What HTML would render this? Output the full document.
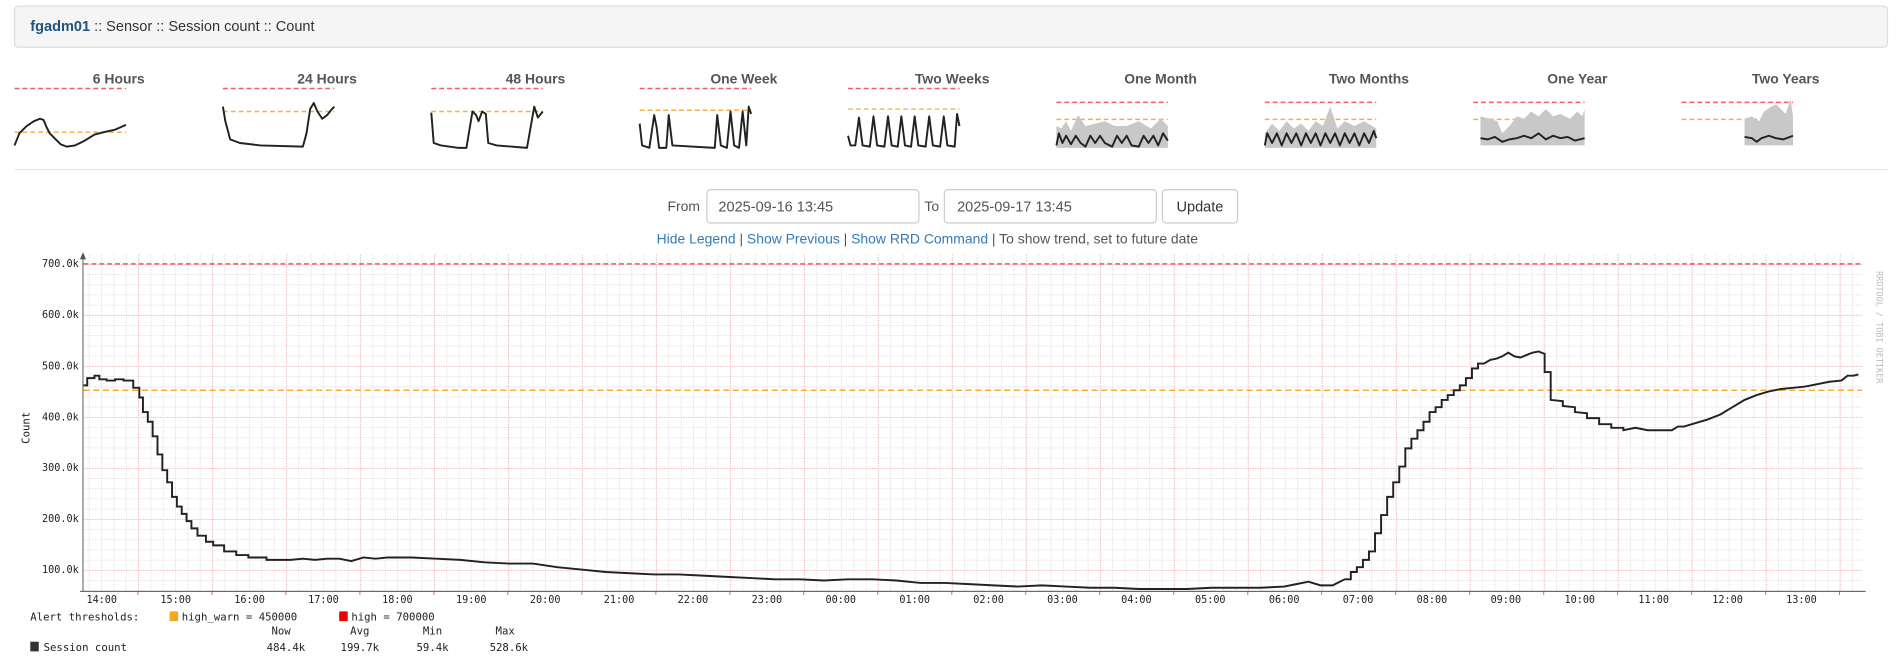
<!DOCTYPE html>
<html><head><meta charset="utf-8"><style>
html,body{margin:0;padding:0;background:#fff;overflow:hidden}
svg{display:block}
.s{font-family:"Liberation Sans",sans-serif}
.m{font-family:"DejaVu Sans Mono","Liberation Mono",monospace}
</style></head><body>
<svg width="1899" height="656" viewBox="0 0 1567.5 541.3" preserveAspectRatio="none" xmlns="http://www.w3.org/2000/svg">
<defs>
<pattern id="vmin" patternUnits="userSpaceOnUse" x="113.9" y="0" width="10.178" height="4"><line x1="0.5" y1="0" x2="0.5" y2="4" stroke="#d8d8d8" stroke-width="0.7" stroke-dasharray="1 1"/></pattern>
<pattern id="vmaj" patternUnits="userSpaceOnUse" x="113.9" y="0" width="61.07" height="4"><line x1="0.5" y1="0" x2="0.5" y2="4" stroke="#f7b5b5" stroke-width="0.8" stroke-dasharray="1 1"/></pattern>
<pattern id="hmin" patternUnits="userSpaceOnUse" x="0" y="217.8" width="4" height="8.416"><line x1="0" y1="0.3" x2="4" y2="0.3" stroke="#d8d8d8" stroke-width="0.7" stroke-dasharray="1 1"/></pattern>
<pattern id="hmaj" patternUnits="userSpaceOnUse" x="0" y="217.8" width="4" height="42.08"><line x1="0" y1="0.3" x2="4" y2="0.3" stroke="#f7b5b5" stroke-width="0.8" stroke-dasharray="1 1"/></pattern>
</defs>
<!-- breadcrumb -->
<rect x="12" y="5" width="1546" height="34" rx="3" fill="#f5f5f5" stroke="#dcdcdc"/>
<text x="25" y="25.5" class="s" font-size="12" fill="#333"><tspan font-weight="bold" fill="#23527c">fgadm01</tspan> :: Sensor :: Session count :: Count</text>
<!-- thumbnails -->
<g class="s" font-size="11.5" font-weight="bold" fill="#555" text-anchor="middle">
<text x="98" y="69">6 Hours</text><text x="270" y="69">24 Hours</text><text x="442" y="69">48 Hours</text><text x="614" y="69">One Week</text><text x="786" y="69">Two Weeks</text><text x="958" y="69">One Month</text><text x="1130" y="69">Two Months</text><text x="1302" y="69">One Year</text><text x="1474" y="69">Two Years</text>
</g>
<g fill="none" stroke-dasharray="4 2.5" stroke-width="1.2">
<path d="M12 73H104M184 73H276M356 73H448M528 73H620M700 73H792M872 84.5H964M1044 84.5H1136M1216 84.5H1308M1388 84.5H1480" stroke="#f0606a"/>
<path d="M12 109H104M184 92H276M356 92H448M528 91H620M700 90H792M872 98.5H964M1044 98.5H1136M1216 98.5H1308M1388 98.5H1480" stroke="#f5b04a"/>
</g>
<g fill="#c8c8c8">
<path d="M872 104L876 106 880 100 884 108 890 95 896 104 904 102 912 100 920 104 930 104 940 100 950 106 958 98 964 104V122H872Z"/>
<path d="M1044 110L1050 102 1056 108 1062 100 1068 106 1074 102 1080 108 1086 100 1092 104 1098 88 1104 106 1110 100 1118 104 1126 100 1136 106V122H1044Z"/>
<path d="M1222 96L1230 98 1236 100 1240 110 1246 104 1252 96 1258 98 1264 92 1270 96 1276 90 1282 96 1288 94 1296 98 1302 92 1306 96 1308 90V120H1222Z"/>
<path d="M1440 98L1446 96 1452 100 1456 92 1462 88 1466 86 1470 90 1474 94 1478 82 1480 96V120H1440Z"/>
</g>
<g fill="none" stroke="#222" stroke-width="1.6" stroke-linejoin="round">
<polyline points="12,120 16,110 22,104 28,100 33,98 36,99 38,104 41,110 45,114 50,119 55,121 62,120 70,116 78,111 86,109 95,107 104,103"/>
<polyline points="184,88 186,100 190,115 198,118 215,120 250,121 253,110 256,90 259,85 262,92 266,98 270,95 274,90 276,88"/>
<polyline points="356,93 358,118 364,120 378,122 385,122 387,110 390,92 393,95 395,100 398,92 401,94 403,118 410,120 435,122 438,105 441,88 444,97 448,92"/>
<polyline points="528,102 530,120 536,122 540,95 542,105 544,122 550,122 552,95 555,120 590,122 592,95 595,120 600,122 603,92 606,120 610,122 613,92 616,120 618,88 620,94"/>
<polyline points="700,112 702,120 706,120 709,97 712,120 718,121 721,96 724,120 730,121 733,96 736,120 741,121 744,96 747,120 752,121 755,96 758,120 764,121 767,96 770,120 776,121 779,96 782,120 788,121 790,94 792,104"/>
<polyline points="872,120 874,110 877,118 880,112 884,119 888,112 892,118 896,121 900,112 904,118 908,112 912,118 918,121 922,112 926,118 930,112 934,120 940,121 944,112 948,118 952,112 956,120 960,110 964,116"/>
<polyline points="1044,120 1046,110 1050,118 1054,110 1058,120 1062,110 1066,118 1070,110 1074,120 1078,110 1082,118 1086,110 1090,120 1094,110 1098,118 1102,110 1106,120 1110,110 1114,118 1118,110 1122,120 1126,110 1130,118 1134,108 1136,114"/>
<polyline points="1222,114 1228,115 1234,113 1240,117 1246,115 1252,114 1258,112 1264,114 1270,110 1276,115 1282,112 1288,114 1294,113 1300,116 1308,114"/>
<polyline points="1440,113 1446,114 1450,117 1454,114 1460,112 1466,114 1472,115 1480,112"/>
</g>
<line x1="12" y1="140" x2="1558" y2="140" stroke="#e5e5e5"/>
<!-- form -->
<g class="s" font-size="11.5">
<text x="551" y="174" fill="#555">From</text>
<rect x="583.5" y="156.5" width="175" height="27.5" rx="3" fill="#fff" stroke="#ccc"/>
<text x="593" y="174.5" fill="#555" font-size="12">2025-09-16 13:45</text>
<text x="763" y="174" fill="#555">To</text>
<rect x="779.5" y="156.5" width="175" height="27.5" rx="3" fill="#fff" stroke="#ccc"/>
<text x="790" y="174.5" fill="#555" font-size="12">2025-09-17 13:45</text>
<rect x="959.5" y="156.5" width="62" height="27.5" rx="3" fill="#fff" stroke="#ccc"/>
<text x="990.5" y="174.5" fill="#333" font-size="12" text-anchor="middle">Update</text>
<text x="542" y="201" font-size="11.5"><tspan fill="#337ab7">Hide Legend</tspan><tspan fill="#555"> | </tspan><tspan fill="#337ab7">Show Previous</tspan><tspan fill="#555"> | </tspan><tspan fill="#337ab7">Show RRD Command</tspan><tspan fill="#555"> | To show trend, set to future date</tspan></text>
</g>
<!-- graph grid -->
<rect x="69" y="210" width="1468" height="278" fill="url(#vmin)"/>
<rect x="69" y="210" width="1468" height="278" fill="url(#hmin)"/>
<rect x="69" y="210" width="1468" height="278" fill="url(#vmaj)"/>
<rect x="69" y="210" width="1468" height="278" fill="url(#hmaj)"/>
<line x1="69" y1="217.8" x2="1537" y2="217.8" stroke="#e8202a" stroke-width="0.9" stroke-dasharray="4 2.5"/>
<line x1="69" y1="322" x2="1537" y2="322" stroke="#f5a010" stroke-width="1.1" stroke-dasharray="5 3"/>
<line x1="68.5" y1="210" x2="68.5" y2="488" stroke="#555" stroke-width="0.8"/>
<path d="M66 214L68.5 208 71 214Z" fill="#555"/>
<line x1="66" y1="488" x2="1540" y2="488" stroke="#555" stroke-width="0.8"/>
<g stroke="#c33" stroke-width="0.6">
<path d="M113.9 488v3M175 488v3M236 488v3M297.1 488v3M358.2 488v3M419.2 488v3M480.3 488v3M541.4 488v3M602.5 488v3M663.5 488v3M724.6 488v3M785.7 488v3M846.7 488v3M907.8 488v3M968.9 488v3M1030 488v3M1091 488v3M1152.1 488v3M1213.2 488v3M1274.3 488v3M1335.3 488v3M1396.4 488v3M1457.5 488v3M1518.5 488v3"/>
</g>
<g class="m" font-size="8.4" fill="#222" text-anchor="end">
<text x="65" y="220.5">700.0k</text><text x="65" y="262.6">600.0k</text><text x="65" y="304.7">500.0k</text><text x="65" y="346.8">400.0k</text><text x="65" y="388.8">300.0k</text><text x="65" y="430.9">200.0k</text><text x="65" y="473">100.0k</text>
</g>
<g class="m" font-size="8.4" fill="#222" text-anchor="middle">
<text x="84" y="497.5">14:00</text><text x="145" y="497.5">15:00</text><text x="206" y="497.5">16:00</text><text x="267" y="497.5">17:00</text><text x="328" y="497.5">18:00</text><text x="389" y="497.5">19:00</text><text x="450" y="497.5">20:00</text><text x="511" y="497.5">21:00</text><text x="572" y="497.5">22:00</text><text x="633" y="497.5">23:00</text><text x="694" y="497.5">00:00</text><text x="755" y="497.5">01:00</text><text x="816" y="497.5">02:00</text><text x="877" y="497.5">03:00</text><text x="938" y="497.5">04:00</text><text x="999" y="497.5">05:00</text><text x="1060" y="497.5">06:00</text><text x="1121" y="497.5">07:00</text><text x="1182" y="497.5">08:00</text><text x="1243" y="497.5">09:00</text><text x="1304" y="497.5">10:00</text><text x="1365" y="497.5">11:00</text><text x="1426" y="497.5">12:00</text><text x="1487" y="497.5">13:00</text>
</g>
<text class="m" font-size="8.8" fill="#222" transform="translate(24.5 353) rotate(-90)" text-anchor="middle">Count</text>
<text class="m" font-size="7" fill="#bbb" transform="translate(1549 270) rotate(90)" text-anchor="middle">RRDTOOL / TOBI OETIKER</text>
<!-- data line -->
<polyline fill="none" stroke="#222" stroke-width="1.6" stroke-linejoin="miter" points="69,318 72,318 72,312 78,312 78,310 82,310 82,313 88,313 88,314 95,314 95,313 102,313 102,314 110,314 110,320 115,320 115,328 118,328 118,340 122,340 122,348 126,348 126,360 130,360 130,375 134,375 134,388 138,388 138,398 142,398 142,410 146,410 146,418 150,418 150,424 154,424 154,430 158,430 158,436 163,436 163,442 170,442 170,447 176,447 176,450 185,450 185,455 195,455 195,458 205,458 205,460 220,460 220,462 240,462 250,461 260,462 270,461 280,461 290,463 300,460 310,461 320,460 340,460 360,461 380,462 400,464 420,465 440,465 460,468 480,470 500,472 520,473 540,474 560,474 580,475 600,476 620,477 640,478 660,478 680,479 700,478 720,478 740,479 760,481 780,481 800,482 820,483 840,484 860,483 880,484 900,485 920,485 940,486 960,486 980,486 1000,485 1020,485 1040,485 1060,484 1070,482 1080,480 1090,483 1100,483 1110,478 1115,478 1115,472 1120,472 1120,468 1125,468 1125,462 1130,462 1130,455 1135,455 1135,440 1140,440 1140,425 1145,425 1145,410 1150,410 1150,398 1155,398 1155,385 1160,385 1160,370 1165,370 1165,362 1170,362 1170,355 1175,355 1175,348 1180,348 1180,340 1185,340 1185,336 1190,336 1190,330 1195,330 1195,326 1200,326 1200,322 1205,322 1205,318 1210,318 1210,312 1215,312 1215,304 1220,304 1220,300 1225,300 1230,297 1235,296 1240,294 1245,291 1250,294 1255,295 1260,293 1265,291 1270,290 1275,292 1275,307 1280,307 1280,330 1290,331 1290,335 1300,336 1300,340 1310,341 1310,345 1320,345 1320,350 1330,350 1330,353 1340,353 1340,355 1350,353 1360,355 1370,355 1380,355 1385,352 1390,352 1400,349 1410,346 1420,342 1430,336 1440,330 1450,326 1460,323 1470,321 1480,320 1490,319 1500,317 1510,315 1520,314 1525,310 1530,310 1534,309"/>
<!-- legend -->
<g class="m" font-size="8.8" fill="#222">
<text x="25" y="512">Alert thresholds:</text>
<rect x="140" y="504.5" width="7" height="8" fill="#f5a623"/>
<text x="150" y="512">high_warn = 450000</text>
<rect x="280" y="504.5" width="7" height="8" fill="#e00"/>
<text x="290" y="512">high = 700000</text>
<text x="232" y="523.5" text-anchor="middle">Now</text><text x="297" y="523.5" text-anchor="middle">Avg</text><text x="357" y="523.5" text-anchor="middle">Min</text><text x="417" y="523.5" text-anchor="middle">Max</text>
<rect x="25" y="529.5" width="7" height="8" fill="#333"/>
<text x="36" y="537">Session count</text>
<text x="236" y="537" text-anchor="middle">484.4k</text><text x="297" y="537" text-anchor="middle">199.7k</text><text x="357" y="537" text-anchor="middle">59.4k</text><text x="420" y="537" text-anchor="middle">528.6k</text>
</g>
</svg>
</body></html>
